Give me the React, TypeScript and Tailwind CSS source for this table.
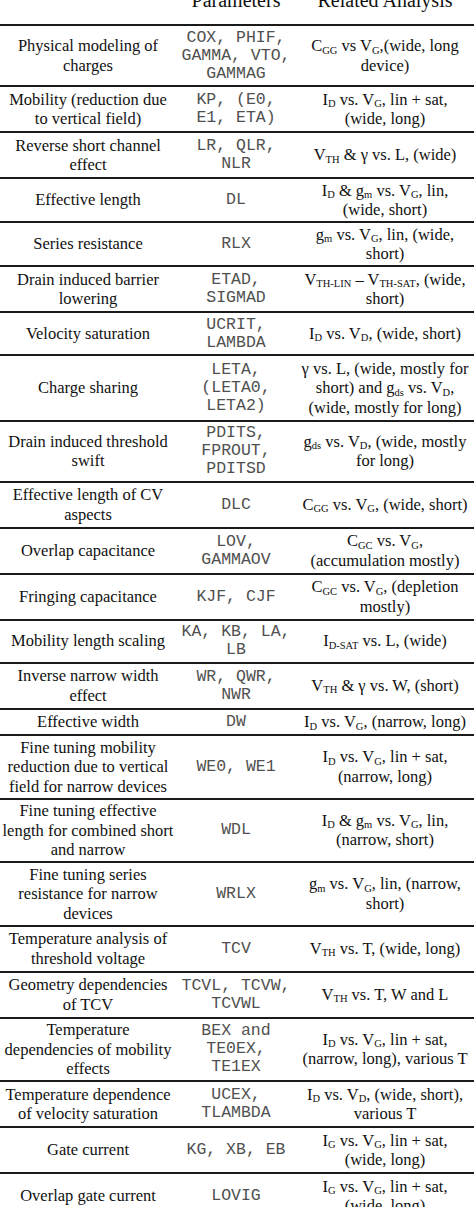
import React from "react";

type Row = { desc: string[]; params: string[]; analysis: string[]; pad?: "sm" | "md" };

// subscripts are written in brackets: "I[D] vs. V[G]"
const rows: Row[] = [
  { desc: ["Physical modeling of", "charges"], params: ["COX, PHIF,", "GAMMA, VTO,", "GAMMAG"], analysis: ["C[GG] vs V[G],(wide, long", "device)"] },
  { desc: ["Mobility (reduction due", "to vertical field)"], params: ["KP, (E0,", "E1, ETA)"], analysis: ["I[D] vs. V[G], lin + sat,", "(wide, long)"] },
  { desc: ["Reverse short channel", "effect"], params: ["LR, QLR,", "NLR"], analysis: ["V[TH] & γ vs. L, (wide)"] },
  { desc: ["Effective length"], params: ["DL"], analysis: ["I[D] & g[m] vs. V[G], lin,", "(wide, short)"], pad: "sm" },
  { desc: ["Series resistance"], params: ["RLX"], analysis: ["g[m] vs. V[G], lin, (wide,", "short)"], pad: "sm" },
  { desc: ["Drain induced barrier", "lowering"], params: ["ETAD,", "SIGMAD"], analysis: ["V[TH-LIN] – V[TH-SAT], (wide,", "short)"] },
  { desc: ["Velocity saturation"], params: ["UCRIT,", "LAMBDA"], analysis: ["I[D] vs. V[D], (wide, short)"] },
  { desc: ["Charge sharing"], params: ["LETA,", "(LETA0,", "LETA2)"], analysis: ["γ vs. L, (wide, mostly for", "short) and g[ds] vs. V[D],", "(wide, mostly for long)"] },
  { desc: ["Drain induced threshold", "swift"], params: ["PDITS,", "FPROUT,", "PDITSD"], analysis: ["g[ds] vs. V[D], (wide, mostly", "for long)"] },
  { desc: ["Effective length of CV", "aspects"], params: ["DLC"], analysis: ["C[GG] vs. V[G], (wide, short)"] },
  { desc: ["Overlap capacitance"], params: ["LOV,", "GAMMAOV"], analysis: ["C[GC] vs. V[G],", "(accumulation mostly)"] },
  { desc: ["Fringing capacitance"], params: ["KJF, CJF"], analysis: ["C[GC] vs. V[G], (depletion", "mostly)"] },
  { desc: ["Mobility length scaling"], params: ["KA, KB, LA,", "LB"], analysis: ["I[D-SAT] vs. L, (wide)"] },
  { desc: ["Inverse narrow width", "effect"], params: ["WR, QWR,", "NWR"], analysis: ["V[TH] & γ vs. W, (short)"] },
  { desc: ["Effective width"], params: ["DW"], analysis: ["I[D] vs. V[G], (narrow, long)"] },
  { desc: ["Fine tuning mobility", "reduction due to vertical", "field for narrow devices"], params: ["WE0, WE1"], analysis: ["I[D] vs. V[G], lin + sat,", "(narrow, long)"], pad: "md" },
  { desc: ["Fine tuning effective", "length for combined short", "and narrow"], params: ["WDL"], analysis: ["I[D] & g[m] vs. V[G], lin,", "(narrow, short)"], pad: "md" },
  { desc: ["Fine tuning series", "resistance for narrow", "devices"], params: ["WRLX"], analysis: ["g[m] vs. V[G], lin, (narrow,", "short)"], pad: "md" },
  { desc: ["Temperature analysis of", "threshold voltage"], params: ["TCV"], analysis: ["V[TH] vs. T, (wide, long)"] },
  { desc: ["Geometry dependencies", "of TCV"], params: ["TCVL, TCVW,", "TCVWL"], analysis: ["V[TH] vs. T, W and L"] },
  { desc: ["Temperature", "dependencies of mobility", "effects"], params: ["BEX and", "TE0EX,", "TE1EX"], analysis: ["I[D] vs. V[G], lin + sat,", "(narrow, long), various T"], pad: "md" },
  { desc: ["Temperature dependence", "of velocity saturation"], params: ["UCEX,", "TLAMBDA"], analysis: ["I[D] vs. V[D], (wide, short),", "various T"] },
  { desc: ["Gate current"], params: ["KG, XB, EB"], analysis: ["I[G] vs. V[G], lin + sat,", "(wide, long)"] },
  { desc: ["Overlap gate current"], params: ["LOVIG"], analysis: ["I[G] vs. V[G], lin + sat,", "(wide, long)"] },
];

const rowBase = "grid grid-cols-[176px_120px_178px] items-center border-b-2 border-[#1a1a1a]";
const padClass = {
  sm: "py-[1.5px]",
  md: "py-[1.5px]",
  normal: "py-[2.5px]",
};

function Rich({ text }: { text: string }) {
  const parts = text.split(/(\[[^\]]+\])/);
  return (
    <>
      {parts.map((p, i) =>
        p.startsWith("[") ? (
          <sub key={i} className="text-[10.5px]">
            {p.slice(1, -1)}
          </sub>
        ) : (
          <span key={i}>{p}</span>
        )
      )}
    </>
  );
}

function Lines({ lines, mono }: { lines: string[]; mono?: boolean }) {
  return (
    <div
      className={
        mono
          ? "flex flex-col items-center whitespace-pre font-['Liberation_Mono',monospace] text-[16.5px] leading-[18px] text-[#505050]"
          : "flex flex-col items-center whitespace-pre"
      }
    >
      {lines.map((l, i) => (
        <div key={i}>{mono ? l : <Rich text={l} />}</div>
      ))}
    </div>
  );
}

export default function App() {
  return (
    <div className="h-[1207px] w-[474px] overflow-hidden bg-white font-['Liberation_Serif',serif] text-[16.5px] leading-[19.5px] text-[#111]">
      <div className="-mt-[12px]">
        <div className="grid grid-cols-[176px_120px_178px] border-b-2 border-[#1a1a1a] pb-[12px] text-[20px] leading-[24px]">
          <div />
          <div className="text-center">Parameters</div>
          <div className="text-center">Related Analysis</div>
        </div>
        {rows.map((r, i) => (
          <div key={i} className={`${rowBase} ${padClass[r.pad ?? "normal"]}`}>
            <Lines lines={r.desc} />
            <Lines lines={r.params} mono />
            <Lines lines={r.analysis} />
          </div>
        ))}
      </div>
    </div>
  );
}
